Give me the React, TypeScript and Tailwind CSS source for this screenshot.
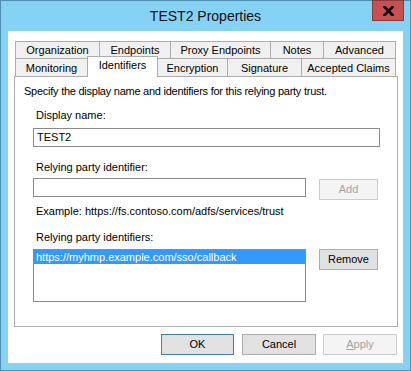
import React from "react";

const font = "font-['Liberation_Sans','Arimo',Arial,sans-serif]";

function Tab({ label, w, first, selected }: { label: string; w: number; first?: boolean; last?: boolean; selected?: boolean }) {
  return (
    <div
      style={{ width: w }}
      className={
        "flex items-center justify-center border-l border-r border-t border-[#acacac] leading-none " +
        (first ? "" : "-ml-px ") +
        (selected
          ? "relative z-10 h-[21px] -mb-px bg-white pb-[3px]"
          : "h-full bg-[#f0f0f0] pt-[1px]")
      }
    >
      {label}
    </div>
  );
}

function Btn({ label, w, disabled, def, children }: { label?: string; w: number; disabled?: boolean; def?: boolean; children?: React.ReactNode }) {
  return (
    <div
      style={{ width: w }}
      className={
        "flex h-[21px] items-center justify-center border leading-none " +
        (disabled
          ? "border-[#cccccc] bg-[#f4f4f4] text-[#a3a3a3]"
          : def
          ? "border-[#3c7fb1] bg-[#e1e1e1] text-black"
          : "border-[#adadad] bg-[#e1e1e1] text-black")
      }
    >
      {children ?? label}
    </div>
  );
}

export default function App() {
  return (
    <div className={"flex h-[371px] w-[411px] flex-col border border-[#4e8fb0] bg-[#86d2f4] text-[11px] text-black " + font}>
      <div className="relative flex h-[30px] shrink-0 items-center justify-center">
        <span className="text-[14px] text-[#111]">TEST2 Properties</span>
        <div className="absolute -top-px right-[6px] flex h-[21px] w-[32px] items-center justify-center border border-[#8a3a3a] bg-[#c75050]">
          <svg width="11" height="10" viewBox="0 0 11 10">
            <path d="M1.5 1 L9.5 9 M9.5 1 L1.5 9" stroke="#000" strokeWidth="2.6" strokeLinecap="square" />
          </svg>
        </div>
      </div>
      <div className="mx-[7px] flex h-[332px] shrink-0 flex-col bg-white pl-[6px] pr-[5px] pt-[10px]">
        {/* tabs */}
        <div className="ml-px flex flex-col">
          <div className="flex h-[17px]">
            <Tab label="Organization" w={85} first />
            <Tab label="Endpoints" w={72} />
            <Tab label="Proxy Endpoints" w={101} />
            <Tab label="Notes" w={54} />
            <Tab label="Advanced" w={73} last />
          </div>
          <div className="flex h-[18px] items-end">
            <Tab label="Monitoring" w={73} first />
            <Tab label="Identifiers" w={71} selected />
            <Tab label="Encryption" w={71} />
            <Tab label="Signature" w={75} />
            <Tab label="Accepted Claims" w={95} last />
          </div>
        </div>
        {/* panel */}
        <div className="flex h-[251px] w-[384px] flex-col border border-[#adadad] pl-[9px] pt-[6px]">
          <div className="h-[16px] whitespace-nowrap leading-[16px] tracking-[-0.25px]">Specify the display name and identifiers for this relying party trust.</div>
          <div className="pl-[9px]">
            <div className="mt-[8px] h-[16px] pl-[3px] leading-[16px]">Display name:</div>
            <div className="mt-[5px] flex h-[19px] w-[347px] items-center border border-[#8a8a8a] pl-[3px] leading-none">TEST2</div>
            <div className="mt-[12px] h-[16px] pl-[3px] leading-[16px]">Relying party identifier:</div>
            <div className="mt-[3px] flex h-[22px] items-start">
              <div className="h-[19px] w-[273px] border border-[#8a8a8a]" />
              <div className="ml-[13px] mt-px">
                <Btn label="Add" w={59} disabled />
              </div>
            </div>
            <div className="mt-[3px] h-[16px] pl-[3px] leading-[16px]">Example: https://fs.contoso.com/adfs/services/trust</div>
            <div className="mt-[10px] h-[16px] pl-[3px] leading-[16px]">Relying party identifiers:</div>
            <div className="mt-[4px] flex items-start">
              <div className="h-[53px] w-[273px] border border-[#8a8a8a]">
                <div className="flex h-[14px] items-center bg-[#3399ff] pl-[2px] leading-none text-white">
                  https://myhmp.example.com/sso/callback
                </div>
              </div>
              <div className="ml-[13px]">
                <Btn label="Remove" w={59} />
              </div>
            </div>
          </div>
        </div>
        {/* footer */}
        <div className="mt-[7px] flex justify-end pr-px">
          <Btn label="OK" w={73} def />
          <div className="ml-[8px]">
            <Btn label="Cancel" w={74} />
          </div>
          <div className="ml-[7px]">
            <Btn w={74} disabled>
              <span>
                <span className="underline">A</span>pply
              </span>
            </Btn>
          </div>
        </div>
      </div>
    </div>
  );
}
